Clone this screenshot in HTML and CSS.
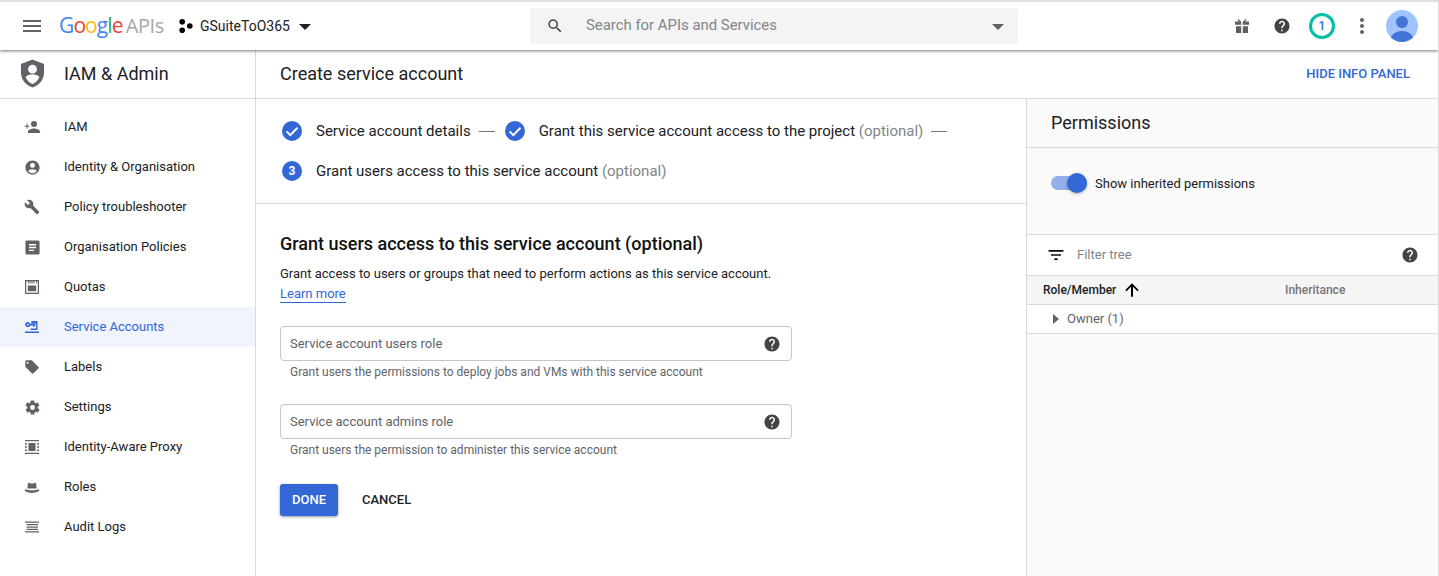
FILE: index.html
```html
<!DOCTYPE html>
<html lang="en">
<head>
<meta charset="utf-8">
<title>Create service account</title>
<link rel="stylesheet" href="styles.css">
</head>
<body>
<svg class="defs" width="0" height="0" aria-hidden="true">
  <symbol id="help" viewBox="0 0 24 24"><path d="M12 2C6.48 2 2 6.48 2 12s4.48 10 10 10 10-4.48 10-10S17.52 2 12 2zm1 17h-2v-2h2v2zm2.07-7.75l-.9.92C13.45 12.9 13 13.5 13 15h-2v-.5c0-1.1.45-2.1 1.17-2.83l1.24-1.26c.37-.36.59-.86.59-1.41 0-1.1-.9-2-2-2s-2 .9-2 2H8c0-2.21 1.79-4 4-4s4 1.79 4 4c0 .88-.36 1.68-.93 2.25z"/></symbol>
  <symbol id="check" viewBox="0 0 24 24"><path d="M12 2a10 10 0 1 0 0 20 10 10 0 0 0 0-20z" fill="#3367d6"/><path d="M6.6 12.4l3.7 3.7 7.2-7.3" fill="none" stroke="#fff" stroke-width="2"/></symbol>
</svg>
<header class="topbar">
  <button class="icon-btn menu" aria-label="Menu"><svg viewBox="0 0 24 24" width="24" height="24"><path d="M3 18h18v-2H3v2zm0-5h18v-2H3v2zm0-7v2h18V6H3z" fill="#5f6368"/></svg></button>
  <div class="logo"><span class="b">G</span><span class="r">o</span><span class="y">o</span><span class="b">g</span><span class="g">l</span><span class="r">e</span><span class="apis">APIs</span></div>
  <div class="project">
    <svg viewBox="0 0 14 14" width="14" height="14"><circle cx="3.2" cy="2.8" r="2.8"/><circle cx="3.2" cy="11.2" r="2.8"/><circle cx="10.8" cy="7" r="2.8"/></svg>
    <span>GSuiteToO365</span>
    <i class="caret dark"></i>
  </div>
  <div class="search">
    <svg viewBox="0 0 24 24" width="18" height="18"><path d="M15.5 14h-.79l-.28-.27A6.47 6.47 0 0 0 16 9.5 6.5 6.5 0 1 0 9.5 16c1.61 0 3.09-.59 4.23-1.57l.27.28v.79l5 4.99L20.49 19l-4.99-5zm-6 0C7.01 14 5 11.99 5 9.5S7.01 5 9.5 5 14 7.01 14 9.5 11.99 14 9.500 14z" fill="#444"/></svg>
    <span class="search-text">Search for APIs and Services</span>
    <i class="caret grey"></i>
  </div>
  <div class="actions">
    <svg class="a-gift" viewBox="0 0 16 16" width="16" height="16"><path d="M1 3.6h6.2v3.2H1zM8.800 3.600H15v3.200H8.800zM2 8.200h5.200V15H2zM8.800 8.200H14V15H8.800zM4.200 1l3 2.400H5.400L3.400 1.900zM11.800 1l-3 2.400h1.800l2-1.500z" fill="#5f5f5f"/></svg>
    <svg class="a-help" width="18" height="18"><use href="#help"/></svg>
    <div class="badge">1</div>
    <svg class="a-more" viewBox="0 0 24 24" width="24" height="24"><path d="M12 8c1.100 0 2-.9 2-2s-.9-2-2-2-2 .9-2 2 .9 2 2 2zm0 2c-1.100 0-2 .9-2 2s.9 2 2 2 2-.9 2-2-.9-2-2-2zm0 6c-1.100 0-2 .9-2 2s.9 2 2 2 2-.9 2-2-.9-2-2-2z" fill="#5f6368"/></svg>
    <svg class="avatar" viewBox="0 0 32 32" width="32" height="32"><defs><clipPath id="av"><circle cx="16" cy="16" r="16"/></clipPath></defs><circle cx="16" cy="16" r="16" fill="#a0c3ff"/><g clip-path="url(#av)" fill="#4375d6"><circle cx="16" cy="12" r="6"/><ellipse cx="16" cy="28.500" rx="11" ry="7.500"/></g></svg>
  </div>
</header>

<div class="page">
  <aside class="sidebar">
    <div class="side-head">
      <svg viewBox="0 0 26 30" width="25" height="29"><path d="M13 0.500L1 5v9c0 7.400 5.100 13.600 12 15.500C19.900 27.600 25 21.400 25 14V5z" fill="#5f6368"/><circle cx="13" cy="10.500" r="4.600" fill="#fff"/><path d="M5.800 18.600c1.800-2 4.400-2.800 7.200-2.800s5.400.8 7.200 2.800C18.600 22.500 15.900 24.800 13 25.900 10.100 24.800 7.400 22.500 5.800 18.600z" fill="#fff"/></svg>
      <span>IAM &amp; Admin</span>
    </div>
    <nav class="nav">
      <a class="nav-item"><svg viewBox="0 0 16 16" width="16" height="16"><path d="M10 8a3 3 0 1 0 0-6 3 3 0 0 0 0 6zM3.500 6.700V4.800H2.500v1.900H.6v1h1.900v1.900h1V7.700h1.900v-1zM10 9.500c-2 0-6 1-6 3v1.500h12v-1.500c0-2-4-3-6-3z"/></svg><span>IAM</span></a>
      <a class="nav-item"><svg viewBox="0 0 24 24" width="17" height="17"><path d="M12 2C6.480 2 2 6.480 2 12s4.480 10 10 10 10-4.480 10-10S17.520 2 12 2zm0 3.500a3.500 3.500 0 1 1 0 7 3.500 3.500 0 0 1 0-7zM12 20a8 8 0 0 1-6-2.800C6.800 15.500 9.600 14.500 12 14.500s5.200 1 6 2.700A8 8 0 0 1 12 20z"/></svg><span>Identity &amp; Organisation</span></a>
      <a class="nav-item"><svg viewBox="0 0 24 24" width="16" height="16"><path d="M22.700 19l-9.100-9.100c.9-2.300.4-5-1.500-6.900-2-2-5-2.400-7.400-1.300L9 6 6 9 1.600 4.700C.4 7.100.9 10.100 2.900 12.100c1.900 1.900 4.600 2.400 6.900 1.500l9.100 9.100c.4.400 1 .4 1.400 0l2.300-2.300c.5-.4.5-1.100.1-1.400z"/></svg><span>Policy troubleshooter</span></a>
      <a class="nav-item"><svg viewBox="0 0 24 24" width="17" height="17"><path d="M20 2H4a2 2 0 0 0-2 2v16c0 1.100.9 2 2 2h16a2 2 0 0 0 2-2V4a2 2 0 0 0-2-2zM7 7h10v2H7zm0 4h10v2H7zm0 4h7v2H7z" fill-rule="evenodd"/></svg><span>Organisation Policies</span></a>
      <a class="nav-item"><svg viewBox="0 0 14 14" width="14" height="14"><path d="M0 0h14v14H0zM1.200 1.200v11.600h11.600V1.200h-.9v2.300h-1V1.200H9.300v2.300h-1V1.200H7.500v2.300h-1V1.200H5.700v2.300h-1V1.200H3.900v2.300h-1V1.200zM2.800 5.500h8.400v5.700H2.800z" fill-rule="evenodd"/></svg><span>Quotas</span></a>
      <a class="nav-item active"><svg viewBox="0 0 14 12" width="14" height="12"><path d="M0 10.500h14V12H0zM12.500 0v9H5.500V7.600h5.600V2.400H6.300V0zM2.800 1a2.600 2.600 0 0 1 2.400 1.700h5.300v1.800H9.500v1.500H8V4.500H5.200A2.600 2.600 0 1 1 2.800 1zm0 1.700a.9.9 0 1 0 0 1.800.9.9 0 0 0 0-1.800z" fill-rule="evenodd"/></svg><span>Service Accounts</span></a>
      <a class="nav-item"><svg viewBox="0 0 24 24" width="16" height="16"><path d="M21.400 11.600l-9-9C12 2.200 11.500 2 11 2H4C2.900 2 2 2.900 2 4v7c0 .6.200 1.100.6 1.400l9 9c.4.400.9.600 1.400.600s1.100-.2 1.400-.6l7-7c.4-.4.600-.9.600-1.400s-.2-1.100-.6-1.400zM5.500 7a1.500 1.500 0 1 1 0-3 1.500 1.500 0 0 1 0 3z"/></svg><span>Labels</span></a>
      <a class="nav-item"><svg viewBox="0 0 24 24" width="17" height="17"><path d="M19.400 13c0-.3.100-.6.100-1s0-.7-.1-1l2.100-1.600c.2-.2.200-.4.100-.6l-2-3.500c-.1-.2-.4-.3-.6-.2l-2.500 1c-.5-.4-1.100-.7-1.700-1l-.4-2.700c0-.2-.2-.4-.5-.4h-4c-.3 0-.5.200-.5.400l-.4 2.700c-.6.300-1.200.6-1.700 1l-2.500-1c-.2-.1-.5 0-.6.200l-2 3.500c-.1.200-.1.500.1.600L4.600 11c0 .3-.1.600-.1 1s0 .7.100 1l-2.100 1.600c-.2.200-.2.400-.1.600l2 3.500c.1.200.4.300.6.200l2.500-1c.5.400 1.100.7 1.700 1l.4 2.700c0 .2.200.4.500.4h4c.3 0 .5-.2.500-.4l.4-2.700c.6-.3 1.200-.6 1.700-1l2.500 1c.2.100.5 0 .6-.2l2-3.500c.1-.2.100-.5-.1-.6zM12 15.500a3.500 3.500 0 1 1 0-7 3.500 3.500 0 0 1 0 7z"/></svg><span>Settings</span></a>
      <a class="nav-item"><svg viewBox="0 0 14 14" width="14" height="14"><path d="M0 0h14v1.300H0zM0 12.700h14V14H0zM0 3h2v1.500H0zM12 3h2v1.500h-2zM0 6.250h2v1.500H0zM12 6.250h2v1.500h-2zM0 9.500h2V11H0zM12 9.500h2V11h-2zM3.500 3h7v8h-7z"/></svg><span>Identity-Aware Proxy</span></a>
      <a class="nav-item"><svg viewBox="0 0 14 10" width="14" height="11" preserveAspectRatio="none"><path d="M3 0.600c1.300 0 2.400.7 4 .7s2.700-.7 4-.7l.6 5.400H2.400zM0 6.400c2 1 4.500 1.200 7 1.200s5-.2 7-1.200V8c-1.500 1.300-4.300 1.900-7 1.900S1.500 9.300 0 8z"/></svg><span>Roles</span></a>
      <a class="nav-item"><svg viewBox="0 0 14 14" width="14" height="12" preserveAspectRatio="none"><path d="M0 .5h14v1.500H0zM1.500 3.500h11.500V5H1.500zM1.500 6.300h11.500v1.500H1.500zM1.500 9.100h11.500v1.500H1.500zM0 12h14v1.500H0z"/></svg><span>Audit Logs</span></a>
    </nav>
  </aside>

  <div class="content">
    <div class="title-bar">
      <h1>Create service account</h1>
      <a class="hide-info">HIDE INFO PANEL</a>
    </div>
    <div class="columns">
      <main class="main">
        <div class="stepper">
          <div class="step"><svg class="step-ico" width="24" height="24"><use href="#check"/></svg><span>Service account details</span><i class="dash"></i></div>
          <div class="step"><svg class="step-ico" width="24" height="24"><use href="#check"/></svg><span>Grant this service account access to the project <em>(optional)</em></span><i class="dash"></i></div>
          <div class="step"><b class="step-num">3</b><span>Grant users access to this service account <em>(optional)</em></span></div>
        </div>
        <section class="form">
          <h2>Grant users access to this service account (optional)</h2>
          <p class="lead">Grant access to users or groups that need to perform actions as this service account.</p>
          <a class="learn">Learn more</a>
          <div class="field"><span>Service account users role</span><svg width="18" height="18"><use href="#help"/></svg></div>
          <p class="hint">Grant users the permissions to deploy jobs and VMs with this service account</p>
          <div class="field"><span>Service account admins role</span><svg width="18" height="18"><use href="#help"/></svg></div>
          <p class="hint">Grant users the permission to administer this service account</p>
          <div class="buttons"><button class="done">DONE</button><button class="cancel">CANCEL</button></div>
        </section>
      </main>
      <aside class="panel">
        <h3>Permissions</h3>
        <div class="toggle-row"><i class="toggle"><i class="knob"></i></i><span>Show inherited permissions</span></div>
        <div class="filter"><svg viewBox="0 0 24 24" width="20" height="20"><path d="M10 18h4v-2h-4v2zM3 6v2h18V6H3zm3 7h12v-2H6v2z" fill="#111"/></svg><span>Filter tree</span><svg class="filter-help" width="18" height="18"><use href="#help"/></svg></div>
        <div class="thead"><span class="th-role">Role/Member</span><svg viewBox="0 0 24 24" width="20" height="20"><path d="M4 12l1.400 1.400L10.800 8V20h2.400V8l5.400 5.400L20 12l-8-8z" fill="#000"/></svg><span class="th-inh">Inheritance</span></div>
        <div class="trow"><i class="tri"></i><span>Owner (1)</span></div>
      </aside>
    </div>
  </div>
</div>
</body>
</html>
```
FILE: styles.css
```css
* { box-sizing: border-box; }
html, body { margin: 0; height: 576px; overflow: hidden; }
body {
  font-family: Roboto, "Liberation Sans", sans-serif;
  color: #202124;
  background: #fff;
  border-right: 1px solid #dadada;
  display: flex;
  flex-direction: column;
}
.defs { position: absolute; }
svg { display: block; flex: none; }
.topbar {
  height: 50px;
  flex: none;
  border-top: 2px solid #e0e0e0;
  display: flex;
  align-items: center;
  background: #fff;
  box-shadow: 0 1px 3px rgba(0,0,0,.55);
  position: relative;
  z-index: 2;
  padding-left: 20px;
}
.icon-btn { border: 0; padding: 0; background: none; width: 24px; height: 24px; }
.logo { margin-left: 15px; padding-bottom: 2px; width: 106px; font: 500 21px "Open Sans", sans-serif; letter-spacing: -.9px; white-space: nowrap; }
.logo .b { color: #4285f4; }
.logo .r { color: #ea4335; }
.logo .y { color: #fbbc05; }
.logo .g { color: #34a853; }
.logo .apis { color: #a6a6a6; margin-left: 3px; font-size: 20px; font-weight: 400; letter-spacing: -.4px; }
.project { display: flex; align-items: center; margin-left: 14px; font-size: 14px; width: 351px; }
.project svg { margin-right: 7px; }
.project svg circle { fill: #000; }
.caret { display: block; width: 0; height: 0; border-left: 6px solid transparent; border-right: 6px solid transparent; }
.caret.dark { border-top: 6px solid #212121; margin-left: 9px; margin-top: 2px; }
.caret.grey { border-top: 6px solid #5f5f5f; margin-left: auto; margin-right: 14px; margin-top: 2px; }
.search {
  width: 488px; height: 36px; background: #f4f4f4; border-radius: 2px;
  display: flex; align-items: center; padding-left: 16px;
}
.search-text { margin-left: 22px; padding-bottom: 2px; font-size: 14.9px; color: #80868b; }
.actions { display: flex; align-items: center; margin-left: auto; padding-right: 20px; }
.a-gift { margin-right: 23px; fill: #5f5f5f; }
.a-help { margin-right: 18px; fill: #444; }
.badge {
  width: 26px; height: 26px; border: 3px solid #00bfa5; border-radius: 50%;
  color: #3367d6; font-size: 12px; font-weight: 500; display: flex; align-items: center; justify-content: center;
}
.a-more { margin-left: 15px; margin-right: 12px; }
.page { flex: 1; display: flex; min-height: 0; }
.sidebar { width: 256px; flex: none; border-right: 1px solid #dadada; }
.side-head {
  height: 49px; border-bottom: 1px solid #dadada; display: flex; align-items: center;
  padding: 0 0 2px 20px; font-size: 18px; gap: 19px;
}
.nav { padding-top: 8px; display: flex; flex-direction: column; }
.nav-item { height: 40px; display: grid; grid-template-columns: 64px 1fr; align-items: center; font-size: 13px; }
.nav-item svg { justify-self: center; fill: #5f6368; }
.nav-item span { padding-bottom: 2px; }
.nav-item.active { background: #eff4fd; color: #3367d6; }
.nav-item.active svg { fill: #3367d6; }
.content { flex: 1; min-width: 0; display: flex; flex-direction: column; }
.title-bar {
  height: 49px; flex: none; border-bottom: 1px solid #dadada; display: flex; align-items: center;
  justify-content: space-between; padding: 0 28px 2px 24px;
}
.title-bar h1 { margin: 0; font-size: 18px; font-weight: 400; }
.hide-info { color: #3367d6; font-size: 13px; font-weight: 500; }
.columns { flex: 1; display: flex; min-height: 0; }
.main { width: 770px; flex: none; }
.stepper {
  height: 105px; border-bottom: 1px solid #dadada; padding: 12px 24px 0 24px;
  display: flex; flex-wrap: wrap; align-content: flex-start;
}
.step { height: 40px; display: flex; align-items: center; font-size: 15px; }
.step-ico { margin-right: 12px; margin-left: 0; }
.step-num {
  width: 20px; height: 20px; border-radius: 50%; background: #3367d6; color: #fff; font-size: 12px;
  display: flex; align-items: center; justify-content: center; margin: 0 14px 0 2px;
}
.step em { font-style: normal; color: #80868b; }
.dash { display: block; width: 16px; height: 1px; background: #757575; margin: 0 8px; }
.form { padding: 28px 24px 0; }
.form h2 { margin: 0; font-size: 18px; font-weight: 500; line-height: 24px; color: #111; }
.lead { margin: 8px 0 0; font-size: 13px; line-height: 20px; }
.learn { display: block; width: fit-content; margin-top: 2px; font-size: 13px; line-height: 16px; color: #3367d6; border-bottom: 1px solid #3367d6; }
.field {
  width: 512px; height: 35px; border: 1px solid #c6c6c6; border-radius: 4px; margin-top: 23px;
  display: flex; align-items: center; justify-content: space-between; padding: 0 10px 0 9px;
  font-size: 13px; color: #5f6368;
}
.field svg { fill: #444; }
.field + .hint { margin: 3px 0 0 10px; }
.hint { font-size: 12px; line-height: 16px; color: #5f6368; margin: 0; }
.hint + .field { margin-top: 24px; }
.buttons { display: flex; align-items: center; margin-top: 26px; }
.done {
  width: 58px; height: 32px; border: 0; border-radius: 3px; background: #3367d6; color: #fff;
  font: 500 13px Roboto, sans-serif; box-shadow: 0 1px 3px rgba(0,0,0,.4); padding: 0 0 2px;
}
.cancel { margin-left: 16px; border: 0; padding: 0 8px 2px; background: none; color: #202124; font: 500 13px Roboto, sans-serif; }
.panel { flex: 1; min-width: 0; border-left: 1px solid #dadada; background: #fafafa; }
.panel h3 { margin: 0; height: 49px; border-bottom: 1px solid #dadada; padding-left: 24px; font-size: 18px; font-weight: 400; line-height: 48px; }
.toggle-row { height: 87px; display: flex; align-items: flex-start; padding: 25px 0 0 24px; font-size: 13px; border-bottom: 1px solid #dadada; }
.toggle-row span { margin-left: 8px; margin-top: 1px; line-height: 20px; }
.toggle { display: block; width: 36px; height: 14px; margin-top: 3px; border-radius: 7px; background: #94b0ea; position: relative; }
.knob { position: absolute; right: 0; top: -3px; width: 20px; height: 20px; border-radius: 50%; background: #3367d6; box-shadow: 0 1px 3px rgba(0,0,0,.3); }
.filter { height: 41px; background: #fff; border-bottom: 1px solid #dadada; display: flex; align-items: center; padding-left: 19px; font-size: 13px; color: #80868b; }
.filter span { margin-left: 11px; padding-bottom: 2px; }
.filter-help { margin-left: auto; margin-right: 19px; fill: #444; }
.thead { height: 29px; background: #f5f5f5; border-bottom: 1px solid #dadada; display: flex; align-items: center; padding-left: 16px; font-size: 12px; font-weight: 500; position: relative; }
.th-role { margin-right: 6px; }
.th-inh { position: absolute; left: 258px; color: #757575; }
.trow { height: 29px; background: #fff; border-bottom: 1px solid #dadada; display: flex; align-items: center; padding-left: 26px; font-size: 13px; color: #5f6368; }
.trow span { padding-bottom: 2px; }
.tri { display: block; width: 0; height: 0; border-top: 5px solid transparent; border-bottom: 5px solid transparent; border-left: 6px solid #5f6368; margin-right: 8px; }
```
